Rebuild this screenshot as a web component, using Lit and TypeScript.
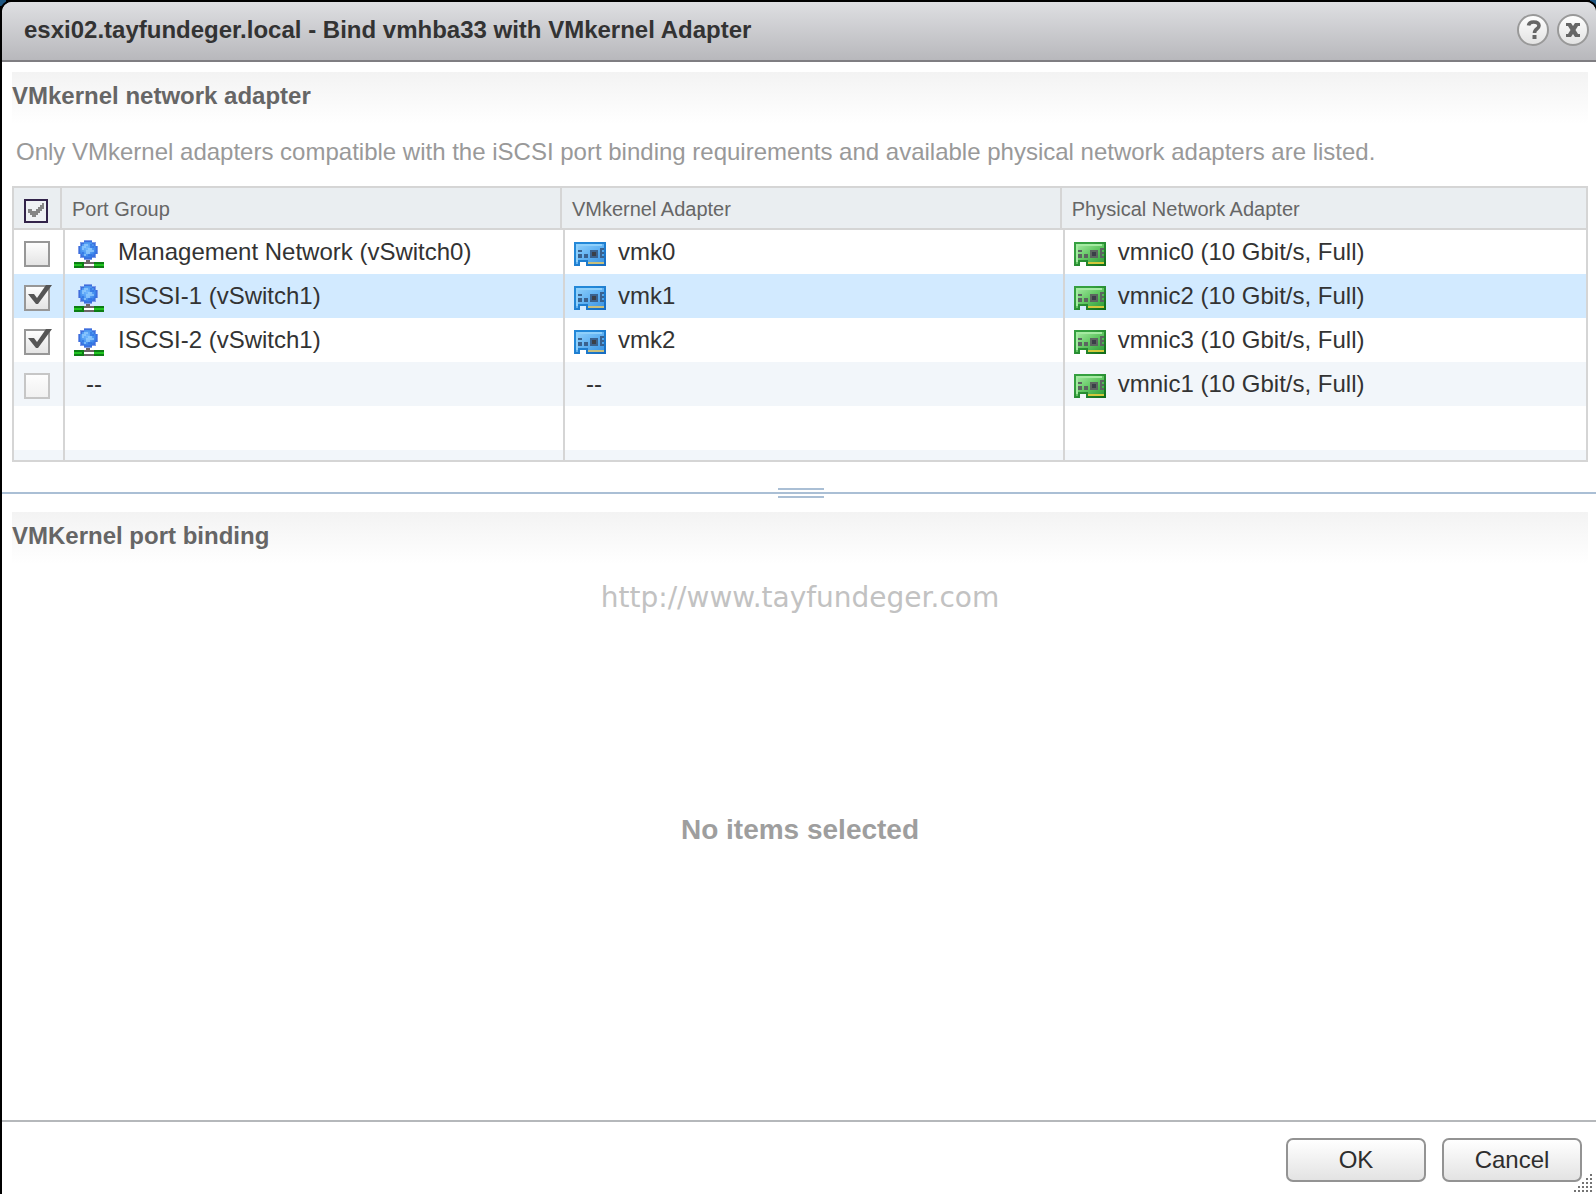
import { LitElement, html, css, svg } from "lit";
import { customElement, property, state } from "lit/decorators.js";

interface Row {
  portGroup: string | null;
  vmk: string | null;
  nic: string;
  checked: boolean;
  selected?: boolean;
}

type IconName = "portgroup" | "vmk" | "nic";

const card = (edge: string, edgeDark: string, light: string, mid: string, dark: string, chip: string, gold: string) => svg`
  <defs>
    <linearGradient id="edge" x2="1" y2="1"><stop offset="0.3" stop-color="${edge}"/><stop offset="1" stop-color="${edgeDark}"/></linearGradient>
    <linearGradient id="face" x2="1" y2="1"><stop stop-color="${light}"/><stop offset="0.5" stop-color="${mid}"/><stop offset="1" stop-color="${dark}"/></linearGradient>
  </defs>
  <path d="M0 0H32V24H12V20H6V24H0Z" fill="url(#edge)"/>
  <path d="M2 2H30V22H14V18H4V22H2Z" fill="url(#face)"/>
  <path d="M2 2H28V4H4V20H2Z" fill="${light}"/>
  <path d="M14 20H30V22H14Z" fill="${gold}"/>
  <path d="M4 8H8V10H4ZM4 12H8V16H4ZM10 12H14V16H10ZM16 8H24V16H16ZM26 6H30V8H28V10H30V12H28V14H30V16H26Z" fill="${chip}"/>
  <path d="M18 10H22V14H18Z" fill="#3b3f48"/>`;

const glyphs = {
  portgroup: {
    w: 30,
    h: 28,
    art: svg`
      <defs>
        <radialGradient id="ball" cx="0.45" cy="0.4" r="0.65">
          <stop offset="0" stop-color="#74baff"/>
          <stop offset="0.6" stop-color="#4a95f0"/>
          <stop offset="1" stop-color="#2b6be0"/>
        </radialGradient>
      </defs>
      <path d="M10 0H18V2H22V6H24V14H22V18H18V20H10V18H6V14H4V6H6V2H10Z" fill="#7d9cea"/>
      <path d="M10 1H18V3H21V6H23V14H21V17H18V19H10V17H7V14H5V6H7V3H10Z" fill="#3c6fdc"/>
      <path d="M10 2H18V4H20V6H22V14H20V16H18V18H10V16H8V14H6V6H8V4H10Z" fill="url(#ball)"/>
      <path d="M8 6H10V4H14V6H12V8H10V10H8ZM14 8H18V10H20V12H16V14H12V10H14ZM10 14H12V16H10Z" fill="#9bd2ff" opacity="0.65"/>
      <path d="M16 4H18V6H20V8H16ZM8 12H10V14H8ZM14 14H18V16H14Z" fill="#2a6be0" opacity="0.6"/>
      <path d="M12 20H16V22H20V28H10V22H12Z" fill="#6e6668"/>
      <path d="M10 24H20V26H10Z" fill="#fff"/>
      <path d="M0 22H10V28H0ZM20 22H30V28H20Z" fill="#0c7d14"/>
      <path d="M0 24H8V26H0ZM20 24H30V26H20Z" fill="#22c422"/>`,
  },
  vmk: { w: 32, h: 24, art: card("#2388d8", "#176bc0", "#8fd0fb", "#62b3f3", "#3b93e2", "#3a628f", "#c9bf7c") },
  nic: { w: 32, h: 24, art: card("#35a040", "#0f6a18", "#a5eaa2", "#62c763", "#2f9c3a", "#5c6560", "#d3c83c") },
};

@customElement("pixel-icon")
class PixelIcon extends LitElement {
  @property() name: IconName = "nic";
  static styles = css`
    :host { display: block; flex: none; line-height: 0; }
    svg { display: block; }
  `;
  render() {
    const g = glyphs[this.name];
    return html`<svg width=${g.w} height=${g.h} viewBox="0 0 ${g.w} ${g.h}" shape-rendering="crispEdges" aria-hidden="true">${g.art}</svg>`;
  }
}

@customElement("check-box")
class CheckBox extends LitElement {
  @property({ type: Boolean }) checked = false;
  @property({ type: Boolean }) disabled = false;
  @property({ type: Boolean }) header = false;
  @property() label = "";
  static styles = css`
    :host { display: block; width: 28px; }
    label { display: grid; grid-template-columns: 28px; width: 28px; }
    input, svg { grid-area: 1 / 1; }
    input {
      appearance: none; box-sizing: border-box; margin: 0; width: 26px; height: 26px;
      border: 2px solid #979797; background: linear-gradient(#fdfdfd, #e4e4e4);
    }
    input:disabled { border-color: #c6c6c6; background: linear-gradient(#fdfdfd, #f1f1f1); }
    input.header { width: 24px; height: 24px; border-color: #32234a; background: #eff1f4; }
    svg { display: block; pointer-events: none; }
  `;
  render() {
    return html`<label>
      <input type="checkbox" class=${this.header ? "header" : ""} aria-label=${this.label}
        .checked=${this.checked} ?disabled=${this.disabled}
        @change=${(e: Event) => { this.checked = (e.target as HTMLInputElement).checked; }}>
      ${this.checked
        ? this.header
          ? html`<svg width="28" height="24" viewBox="0 0 28 24" shape-rendering="crispEdges"><path d="M18 4H20V10H18V12H16V14H14V16H12V18H8V16H6V14H4V10H8V12H12V10H14V8H16V6H18Z" fill="#858585"/></svg>`
          : html`<svg width="28" height="26" viewBox="0 0 28 26"><path d="M4 9H10L13 13L22 0H28L14 19H12Z" fill="#555"/></svg>`
        : null}
    </label>`;
  }
}

@customElement("app-root")
class AppRoot extends LitElement {
  @state() private rows: Row[] = [
    { portGroup: "Management Network (vSwitch0)", vmk: "vmk0", nic: "vmnic0 (10 Gbit/s, Full)", checked: false },
    { portGroup: "ISCSI-1 (vSwitch1)", vmk: "vmk1", nic: "vmnic2 (10 Gbit/s, Full)", checked: true, selected: true },
    { portGroup: "ISCSI-2 (vSwitch1)", vmk: "vmk2", nic: "vmnic3 (10 Gbit/s, Full)", checked: true },
    { portGroup: null, vmk: null, nic: "vmnic1 (10 Gbit/s, Full)", checked: false },
  ];

  static styles = css`
    :host {
      display: flex; min-height: 100vh; box-sizing: border-box; padding: 2px 0 0 2px;
      background: linear-gradient(#1d5580, #1d5580) 0 0 / 6px 6px no-repeat,
        linear-gradient(#1d5580, #1d5580) 100% 0 / 6px 6px no-repeat, #000;
      font: 24px/28px "Liberation Sans", Arial, sans-serif; color: #333;
    }
    .dialog {
      flex: 1; min-width: 0; display: flex; flex-direction: column; background: #fff;
      border-radius: 10px 10px 0 0; box-shadow: 0 0 0 2px #000;
    }
    .titlebar {
      display: flex; align-items: center; gap: 8px; box-sizing: border-box; height: 60px; padding: 0 7px 2px 22px;
      border-bottom: 2px solid #7f7e82; border-radius: 10px 10px 0 0;
      background: linear-gradient(#dedfe2, #b8b8bc);
    }
    h1 { flex: 1; margin: 0; font-size: 24px; line-height: 28px; font-weight: bold; }
    .round { display: block; width: 32px; height: 32px; padding: 0; border: 0; background: none; }
    .round svg { display: block; }
    .section { margin: 10px 8px 0 10px; }
    h2 {
      margin: 0; height: 52px; padding: 10px 0 0; box-sizing: border-box; font-size: 24px; line-height: 28px;
      color: #666; background: linear-gradient(#f3f3f3, #fff);
    }
    .note { margin: 0; padding: 14px 4px 20px; color: #999; }
    .grid { border: 2px solid #d5d5d5; height: 272px; overflow: hidden; }
    table { width: 100%; border-collapse: separate; border-spacing: 0; table-layout: fixed; }
    .c-check { width: 51px; }
    .c-name { width: 31.8%; }
    th {
      height: 42px; box-sizing: border-box; padding: 2px 0 0 7px; border-bottom: 2px solid #d5d5d5; text-align: left; vertical-align: middle;
      font-size: 20px; line-height: 24px; font-weight: normal; color: #666;
      background: linear-gradient(#d5d5d5, #d5d5d5) right 3px top 0 / 2px 100% no-repeat, #eaeef1;
    }
    th:last-child { background: #eaeef1; }
    td { height: 44px; padding: 0 0 0 9px; border-right: 2px solid #d5d5d5; box-sizing: border-box; vertical-align: middle; }
    td:last-child { border-right: 0; }
    th:first-child, td:first-child { padding: 4px 0 0 10px; }
    th:first-child { padding-top: 6px; }
    tr.even td { background: #f2f6fa; }
    tr.selected td { background: #d2eaff; }
    .cell { display: flex; align-items: center; gap: 12px; }
    .cell.group { gap: 14px; }
    .cell pixel-icon { padding-top: 4px; }
    .dash { padding-left: 12px; }
    .splitter {
      display: flex; justify-content: center; align-items: center; height: 10px; margin-top: 26px;
      background: linear-gradient(#aabfd5, #aabfd5) 0 4px / 100% 2px no-repeat;
    }
    .handle { box-sizing: border-box; width: 46px; height: 10px; border: solid #aabfd5; border-width: 2px 0; margin-left: 4px; }
    .binding { flex: 1; display: flex; flex-direction: column; margin-top: 14px; }
    .watermark {
      margin: 18px 0 0; text-align: center; font: 28px/32px "DejaVu Sans", Verdana, sans-serif; color: #c2c2c2;
    }
    .empty {
      flex: 1; display: flex; align-items: center; justify-content: center; margin: 0; padding-bottom: 74px;
      font-size: 28px; line-height: 32px; font-weight: bold; color: #9e9e9e;
    }
    footer {
      display: flex; justify-content: flex-end; gap: 16px; height: 56px; padding: 16px 14px 0;
      border-top: 2px solid #b5b8bb; position: relative;
    }
    .btn {
      width: 140px; height: 44px; padding: 0; border: 2px solid #939393; border-radius: 7px;
      background: linear-gradient(#fff, #e3e3e3); font: inherit; line-height: 28px; color: #2e2e2e;
    }
    .grip { position: absolute; right: 4px; bottom: 2px; }
  `;

  private item(icon: IconName, text: string | null) {
    return text === null
      ? html`<div class="dash">--</div>`
      : html`<div class="cell ${icon === "portgroup" ? "group" : ""}"><pixel-icon name=${icon}></pixel-icon><span>${text}</span></div>`;
  }

  private disc(mark: unknown) {
    return html`<svg width="32" height="32" viewBox="0 0 32 32" aria-hidden="true">
      <defs><linearGradient id="d" x2="0" y2="1"><stop stop-color="#fff"/><stop offset="1" stop-color="#e2e2e2"/></linearGradient></defs>
      <circle cx="16" cy="16" r="15" fill="url(#d)" stroke="#999" stroke-width="2"/>${mark}</svg>`;
  }

  render() {
    const dots = [];
    for (let c = 0; c < 5; c++) for (let r = 0; r <= c; r++) dots.push(svg`<rect x=${c * 4} y=${18 - r * 4} width="2" height="2"/>`);
    return html`<div class="dialog">
      <header class="titlebar">
        <h1>esxi02.tayfundeger.local - Bind vmhba33 with VMkernel Adapter</h1>
        <button class="round" aria-label="Help">${this.disc(svg`<path d="M11.500 11.500C12 8.800 14 8 16.500 8C20 8 22 9.500 22 11.800C22 15 17.500 14.500 17.500 19" fill="none" stroke="#666" stroke-width="3.600"/><path d="M15.500 21H19.500V25H15.500Z" fill="#666"/>`)}</button>
        <button class="round" aria-label="Close">${this.disc(svg`<path d="M9 9H14L16 12L18 9H23V12H21L18.500 16L21 20H23V23H18L16 20L14 23H9V20H11L13.500 16L11 12H9Z" fill="#666"/>`)}</button>
      </header>
      <section class="section">
        <h2>VMkernel network adapter</h2>
        <p class="note">Only VMkernel adapters compatible with the iSCSI port binding requirements and available physical network adapters are listed.</p>
        <div class="grid">
          <table>
            <colgroup><col class="c-check"><col class="c-name"><col class="c-name"><col></colgroup>
            <thead><tr>
              <th><check-box header checked label="Select all"></check-box></th>
              <th>Port Group</th><th>VMkernel Adapter</th><th>Physical Network Adapter</th>
            </tr></thead>
            <tbody>
              ${this.rows.map((r, i) => html`<tr class=${r.selected ? "selected" : i === 3 ? "even" : ""}>
                <td><check-box ?checked=${r.checked} ?disabled=${r.portGroup === null} label=${r.portGroup ?? r.nic}></check-box></td>
                <td>${this.item("portgroup", r.portGroup)}</td>
                <td>${this.item("vmk", r.vmk)}</td>
                <td>${this.item("nic", r.nic)}</td>
              </tr>`)}
              <tr><td></td><td></td><td></td><td></td></tr>
              <tr class="even"><td></td><td></td><td></td><td></td></tr>
            </tbody>
          </table>
        </div>
      </section>
      <div class="splitter"><div class="handle"></div></div>
      <section class="section binding">
        <h2>VMKernel port binding</h2>
        <p class="watermark">http://www.tayfundeger.com</p>
        <p class="empty">No items selected</p>
      </section>
      <footer>
        <button class="btn">OK</button>
        <button class="btn">Cancel</button>
        <svg class="grip" width="18" height="20" viewBox="0 0 18 20" fill="#737373" shape-rendering="crispEdges" aria-hidden="true">${dots}</svg>
      </footer>
    </div>`;
  }
}
